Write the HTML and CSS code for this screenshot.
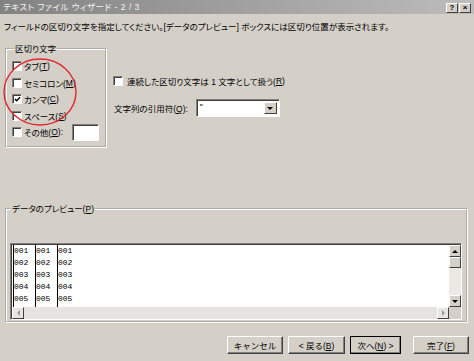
FILE: index.html
```html
<!DOCTYPE html>
<html lang="ja">
<head>
    <meta charset="UTF-8">
    <meta name="viewport" content="width=device-width, initial-scale=1.0">
    <title>テキスト ファイル ウィザード - 2 / 3</title>
    <link rel="stylesheet" href="styles.css">
</head>
<body>
    <div class="window">
        <div class="titlebar">
            <span class="title">テキスト ファイル ウィザード - 2 / 3</span>
            <div class="caption-buttons">
                <span class="cap-btn">?</span>
                <span class="cap-btn">×</span>
            </div>
        </div>

        <p class="intro">フィールドの区切り文字を指定してください。[データのプレビュー] ボックスには区切り位置が表示されます。</p>

        <div class="options">
            <fieldset class="group delimiters">
                <legend>区切り文字</legend>
                <label class="check"><span class="box"></span>タブ(<u>T</u>)</label>
                <label class="check"><span class="box"></span>セミコロン(<u>M</u>)</label>
                <label class="check"><span class="box checked"><svg viewBox="0 0 8 8"><path d="M1 3.5 L3 5.5 L7 1.5" /></svg></span>カンマ(<u>C</u>)</label>
                <label class="check"><span class="box"></span>スペース(<u>S</u>)</label>
                <label class="check"><span class="box"></span>その他(<u>O</u>):<span class="field other"></span></label>
            </fieldset>

            <div class="settings">
                <label class="check"><span class="box"></span>連続した区切り文字は 1 文字として扱う(<u>R</u>)</label>
                <div class="quote-row">
                    <span>文字列の引用符(<u>Q</u>):</span>
                    <div class="combo">
                        <span class="combo-value">"</span>
                        <span class="drop-btn"><span class="arrow down"></span></span>
                    </div>
                </div>
            </div>

            <!-- red circle drawn over the delimiter options -->
            <svg class="annotation" width="76" height="70" viewBox="0 0 76 70">
                <ellipse cx="38" cy="34" rx="36" ry="33" />
            </svg>
        </div>

        <fieldset class="group preview">
            <legend>データのプレビュー(<u>P</u>)</legend>
            <div class="preview-box">
                <div class="data">
                    <div class="col">
                        <div>001</div><div>002</div><div>003</div><div>004</div><div>005</div>
                    </div>
                    <div class="col">
                        <div>001</div><div>002</div><div>003</div><div>004</div><div>005</div>
                    </div>
                    <div class="col last">
                        <div>001</div><div>002</div><div>003</div><div>004</div><div>005</div>
                    </div>
                </div>
                <div class="vscroll">
                    <span class="sb-btn"><span class="arrow up"></span></span>
                    <span class="thumb"></span>
                    <span class="track"></span>
                    <span class="sb-btn"><span class="arrow down"></span></span>
                </div>
                <div class="hscroll">
                    <span class="sb-btn"><span class="arrow left"></span></span>
                    <span class="track"></span>
                    <span class="sb-btn"><span class="arrow right"></span></span>
                </div>
                <div class="corner"></div>
            </div>
        </fieldset>

        <div class="buttons">
            <button class="btn cancel">キャンセル</button>
            <button class="btn back">&lt; 戻る(<u>B</u>)</button>
            <button class="btn next default">次へ(<u>N</u>) &gt;</button>
            <button class="btn finish">完了(<u>F</u>)</button>
        </div>
    </div>
</body>
</html>
```

FILE: styles.css
```css
* {
    margin: 0;
    padding: 0;
    box-sizing: border-box;
}

body {
    font-family: 'Liberation Sans', 'Noto Sans CJK JP', sans-serif;
    font-feature-settings: "palt";
    background: #d4d0c8;
}

.window {
    width: 474px;
    height: 361px;
    background: #d4d0c8;
    color: #000;
    font-size: 8.5px;
    overflow: hidden;
}

/* title bar */
.titlebar {
    height: 14px;
    display: flex;
    align-items: center;
    justify-content: space-between;
    padding: 0 3px 0 3px;
    background: linear-gradient(90deg, #828282 0%, #a6a6a6 60%, #bcbcbc 100%);
}

.title {
    color: #f4f4f4;
    font-size: 8.5px;
    line-height: 14px;
    letter-spacing: 0.5px;
}

.caption-buttons {
    display: flex;
    gap: 1px;
    margin-top: 2px;
}

.cap-btn {
    width: 12px;
    height: 10px;
    display: flex;
    align-items: center;
    justify-content: center;
    background: #d4d0c8;
    border-top: 1px solid #fff;
    border-left: 1px solid #fff;
    border-right: 1px solid #404040;
    border-bottom: 1px solid #404040;
    font-family: 'Liberation Sans', sans-serif;
    font-size: 8px;
    font-weight: bold;
    line-height: 1;
}

.intro {
    margin: 7px 0 0 4px;
    line-height: 12px;
    white-space: nowrap;
}

u {
    text-decoration: underline;
    text-underline-offset: 1px;
}

/* group boxes */
.group {
    border: 2px groove #fff;
    min-inline-size: 0;
}

.group legend {
    margin-left: 2px;
    padding: 0 1px;
    line-height: 12px;
}

.options {
    position: relative;
    display: flex;
    align-items: flex-start;
    margin-top: 10px;
}

.delimiters {
    margin-left: 5px;
    width: 102px;
    height: 105px;
    padding: 3px 0 0 5px;
}

.check {
    display: flex;
    align-items: center;
    height: 16.5px;
    white-space: nowrap;
}

.box {
    width: 10px;
    height: 10px;
    margin-right: 2px;
    flex-shrink: 0;
    background: #fff;
    border-top: 1px solid #808080;
    border-left: 1px solid #808080;
    border-right: 1px solid #fff;
    border-bottom: 1px solid #fff;
    box-shadow: inset 1px 1px 0 #404040;
    display: flex;
    align-items: center;
    justify-content: center;
}

.box svg {
    width: 7px;
    height: 7px;
    margin: 1px 0 0 1px;
}

.box svg path {
    fill: none;
    stroke: #000;
    stroke-width: 1.6;
}

.field {
    display: inline-block;
    background: #fff;
    border-top: 1px solid #808080;
    border-left: 1px solid #808080;
    border-right: 1px solid #fff;
    border-bottom: 1px solid #fff;
    box-shadow: inset 1px 1px 0 #404040;
}

.other {
    width: 27px;
    height: 17px;
    margin-left: 9px;
}

.settings {
    margin-left: 6px;
    padding-top: 30px;
}

.settings .box {
    margin-right: 4px;
}

.quote-row {
    display: flex;
    align-items: center;
    height: 18px;
    margin-top: 9px;
    margin-left: 1px;
    white-space: nowrap;
}

.combo {
    display: flex;
    width: 84px;
    height: 18px;
    margin-left: 8px;
    padding: 2px;
    background: #fff;
    border-top: 1px solid #808080;
    border-left: 1px solid #808080;
    border-right: 1px solid #fff;
    border-bottom: 1px solid #fff;
    box-shadow: inset 1px 1px 0 #404040;
}

.combo-value {
    flex: 1;
    line-height: 10px;
    padding-left: 1px;
}

.drop-btn {
    width: 13px;
    height: 12px;
    display: flex;
    align-items: center;
    justify-content: center;
    background: #d4d0c8;
    border-top: 1px solid #fff;
    border-left: 1px solid #fff;
    border-right: 1px solid #404040;
    border-bottom: 1px solid #404040;
}

.annotation {
    position: absolute;
    left: 2px;
    top: 15px;
    overflow: visible;
}

.annotation ellipse {
    fill: none;
    stroke: #e3262b;
    stroke-width: 1.4;
}

/* arrows */
.arrow {
    width: 0;
    height: 0;
    border: 3px solid transparent;
}

.arrow.down {
    border-top: 3px solid #000;
    border-bottom-width: 0;
    margin-top: 1px;
}

.arrow.up {
    border-bottom: 3px solid #000;
    border-top-width: 0;
}

.arrow.left {
    border-right: 3px solid #9a9a9a;
    border-left-width: 0;
}

.arrow.right {
    border-left: 3px solid #9a9a9a;
    border-right-width: 0;
}

/* preview */
.preview {
    margin: 55px 0 0 5px;
    width: 463px;
    height: 120px;
    padding: 28px 0 0 3px;
}

.preview legend {
    margin-left: 1px;
}

.preview-box {
    width: 452px;
    height: 77px;
    display: grid;
    grid-template-columns: 1fr 12px;
    grid-template-rows: 1fr 12px;
    border-top: 1px solid #808080;
    border-left: 1px solid #808080;
    border-right: 1px solid #fff;
    border-bottom: 1px solid #fff;
    box-shadow: inset 1px 1px 0 #404040;
    padding: 1px 0 0 1px;
}

.data {
    display: flex;
    background: #fff;
    font-family: 'Liberation Mono', monospace;
    font-size: 8px;
    line-height: 12px;
    padding-left: 1px;
}

.col {
    width: 22px;
    border-left: 1px solid #000;
    padding-top: 0;
}

.col.last {
    width: auto;
}

.vscroll {
    display: flex;
    flex-direction: column;
    background: #ebe9e5;
}

.hscroll {
    display: flex;
    background: #e6e4e0;
}

.sb-btn {
    width: 12px;
    height: 12px;
    flex-shrink: 0;
    display: flex;
    align-items: center;
    justify-content: center;
    background: #d4d0c8;
    border-top: 1px solid #fff;
    border-left: 1px solid #fff;
    border-right: 1px solid #404040;
    border-bottom: 1px solid #404040;
}

.hscroll .sb-btn {
    background: #e8e6e2;
}

.thumb {
    height: 11px;
    background: #d4d0c8;
    border-top: 1px solid #fff;
    border-left: 1px solid #fff;
    border-right: 1px solid #404040;
    border-bottom: 1px solid #404040;
}

.track {
    flex: 1;
}

.corner {
    background: #d4d0c8;
}

/* bottom buttons */
.buttons {
    display: flex;
    margin: 13px 0 0 227px;
}

.btn {
    height: 18px;
    font-family: inherit;
    font-size: 8.5px;
    background: #d4d0c8;
    border-top: 1px solid #fff;
    border-left: 1px solid #fff;
    border-right: 1px solid #404040;
    border-bottom: 1px solid #404040;
    box-shadow: inset -1px -1px 0 #808080;
    white-space: nowrap;
}

.cancel { width: 56px; }
.back { width: 57px; margin-left: 5px; }
.next { width: 51px; margin-left: 5px; }
.finish { width: 56px; margin-left: 12px; }

.btn.default {
    outline: 1px solid #000;
    outline-offset: -1px;
}
```
